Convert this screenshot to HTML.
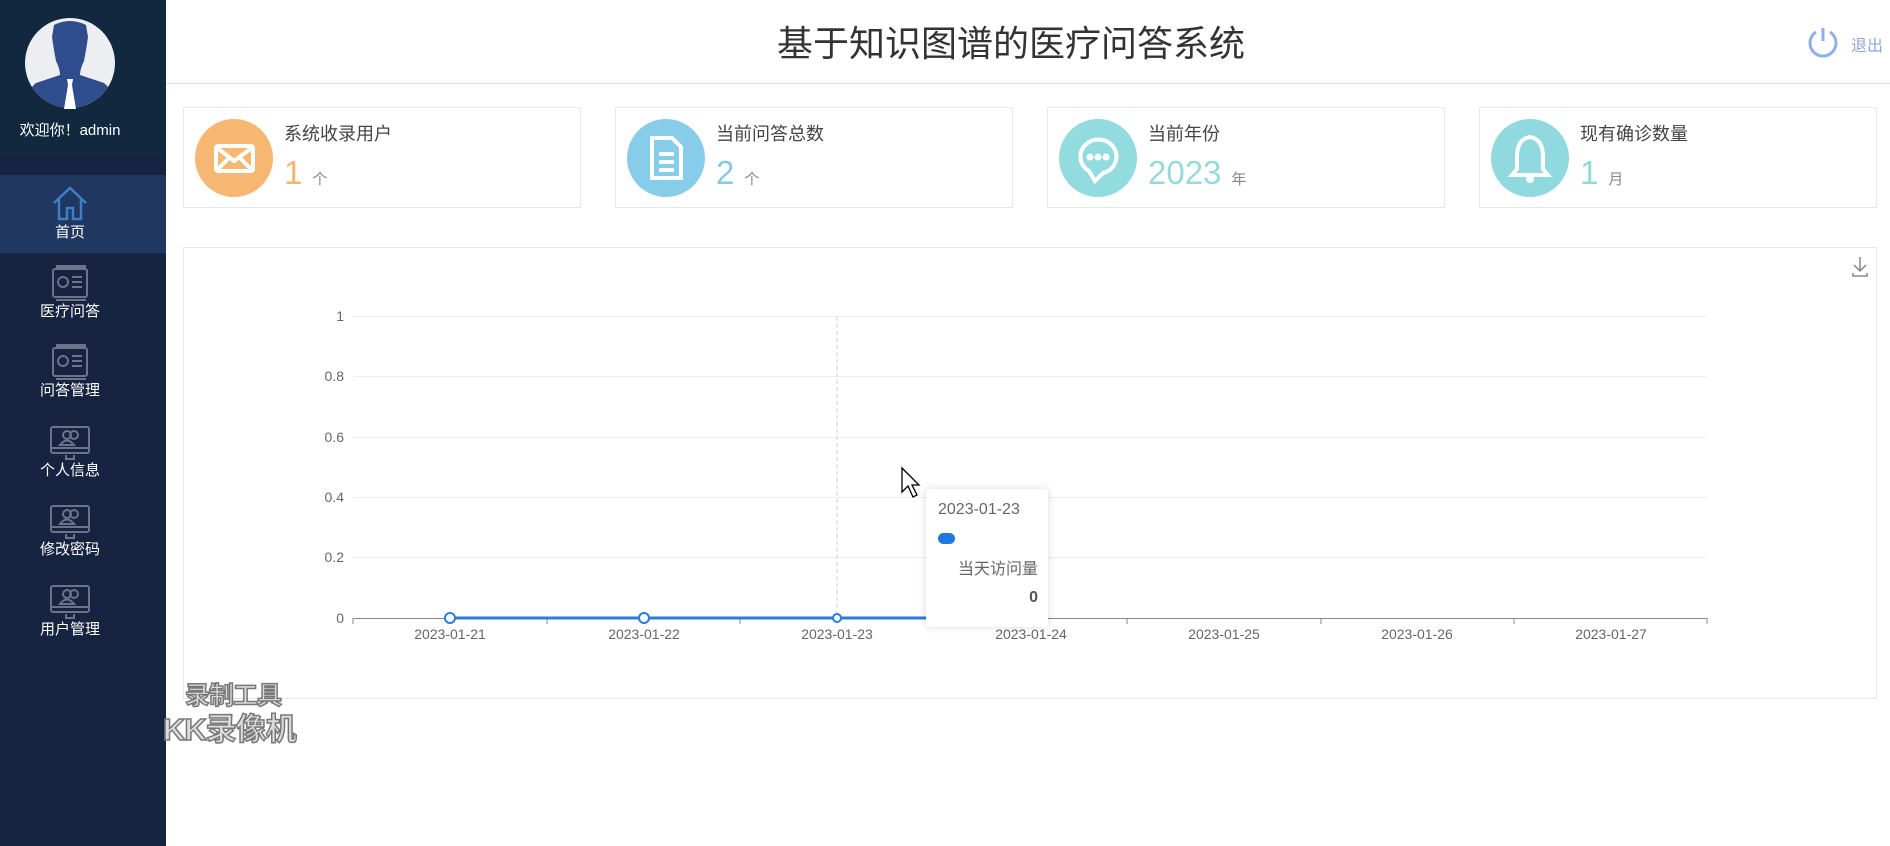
<!DOCTYPE html>
<html><head><meta charset="utf-8"><style>
*{margin:0;padding:0;box-sizing:border-box}
body{width:1890px;height:846px;background:#fff;font-family:"Liberation Sans","Noto Sans CJK SC",sans-serif;position:relative;overflow:hidden}
.side{position:absolute;left:0;top:0;width:166px;height:846px;background:#172441}
.sidetop{position:absolute;left:0;top:0;width:166px;height:157px;background:#11283e}
.welcome{position:absolute;top:119px;left:0;width:140px;text-align:center;color:#fff;font-size:15px}
.nav{position:absolute;left:0;width:166px;height:78px;text-align:center;color:#fff;font-size:15px}
.nav.active{background:#203761}
.nav svg{position:absolute;left:50px;top:8px}
.nav span{position:absolute;left:0;width:140px;top:46px}
.header{position:absolute;left:166px;top:0;right:0;height:84px;border-bottom:1px solid #cfe1f0}
.title{position:absolute;left:166px;right:34px;top:15px;text-align:center;font-size:36px;color:#333}
.card{position:absolute;top:107px;height:101px;width:398px;border:1px solid #e6e6e6}
.circ{position:absolute;left:11px;top:11px;width:78px;height:78px;border-radius:50%}
.circ svg{position:absolute;left:0;top:0}
.ct{position:absolute;left:100px;top:12px;font-size:18px;color:#444}
.cn{position:absolute;left:100px;top:46px;font-size:33px}
.cu{font-size:15px;color:#888;margin-left:10px}
.panel{position:absolute;left:183px;top:247px;width:1694px;height:452px;border:1px solid #e6e6e6}
</style></head><body>
<div class="side"></div><div class="sidetop"></div>
<svg style="position:absolute;left:24px;top:17px" width="92" height="92" viewBox="0 0 92 92">
<defs><clipPath id="c"><circle cx="46" cy="46" r="45"/></clipPath></defs>
<circle cx="46" cy="46" r="45" fill="#eceef2"/>
<g clip-path="url(#c)" fill="#2f4d8c">
<path d="M30 8 Q46 0 62 8 L64 20 Q62 34 60 44 Q56 52 56 58 L80 66 Q90 74 92 92 L0 92 Q2 74 12 66 L36 58 Q36 52 32 44 Q30 34 28 20 Z"/>
</g>
<path d="M43 62 L49 62 L48 68 L52 92 L40 92 L44 68 Z" fill="#fff"/>
</svg>
<div class="welcome">欢迎你！admin</div>

<div class="nav active" style="top:175px"><svg width="40" height="40" viewBox="0 0 40 40" fill="none" stroke="#3f7fc4" stroke-width="2.5"><path d="M4 20 L20 5 L36 20 M9 16 V36 H17 V25 H23 V36 H31 V16"/></svg><span>首页</span></div>
<div class="nav" style="top:255px"><svg width="40" height="40" viewBox="0 0 40 40" fill="none" stroke="#6b7488" stroke-width="2"><rect x="3" y="6" width="34" height="28" rx="2"/><rect x="7" y="3" width="28" height="2"/><circle cx="13" cy="19" r="5"/><path d="M22 14H32M22 19H32M22 24H32M6 37H36"/></svg><span style="top:45px">医疗问答</span></div>
<div class="nav" style="top:334px"><svg width="40" height="40" viewBox="0 0 40 40" fill="none" stroke="#6b7488" stroke-width="2"><rect x="3" y="6" width="34" height="28" rx="2"/><rect x="7" y="3" width="28" height="2"/><circle cx="13" cy="19" r="5"/><path d="M22 14H32M22 19H32M22 24H32M6 37H36"/></svg><span style="top:45px">问答管理</span></div>
<div class="nav" style="top:414px"><svg width="40" height="40" viewBox="0 0 40 40" fill="none" stroke="#6b7488" stroke-width="2"><rect x="1" y="5" width="38" height="26" rx="2"/><path d="M1 26H39M16 33V37H24V33"/><circle cx="17" cy="13" r="4"/><path d="M10 23Q17 14 24 23Z"/><circle cx="24" cy="13" r="4"/></svg><span style="top:45px">个人信息</span></div>
<div class="nav" style="top:493px"><svg width="40" height="40" viewBox="0 0 40 40" fill="none" stroke="#6b7488" stroke-width="2"><rect x="1" y="5" width="38" height="26" rx="2"/><path d="M1 26H39M16 33V37H24V33"/><circle cx="17" cy="13" r="4"/><path d="M10 23Q17 14 24 23Z"/><circle cx="24" cy="13" r="4"/></svg><span style="top:45px">修改密码</span></div>
<div class="nav" style="top:573px"><svg width="40" height="40" viewBox="0 0 40 40" fill="none" stroke="#6b7488" stroke-width="2"><rect x="1" y="5" width="38" height="26" rx="2"/><path d="M1 26H39M16 33V37H24V33"/><circle cx="17" cy="13" r="4"/><path d="M10 23Q17 14 24 23Z"/><circle cx="24" cy="13" r="4"/></svg><span style="top:45px">用户管理</span></div>

<div class="header"></div>
<div class="title">基于知识图谱的医疗问答系统</div>
<svg style="position:absolute;left:1806px;top:25px" width="34" height="34" viewBox="0 0 34 34" fill="none" stroke="#8fb0e6" stroke-width="3"><path d="M10 7 A13 13 0 1 0 24 7"/><path d="M17 3V16"/></svg>
<div style="position:absolute;left:1851px;top:32px;font-size:16px;color:#8fa6dd">退出</div>

<div class="card" style="left:183px"><div class="circ" style="background:#f6b772"><svg width="78" height="78" fill="none" stroke="#fff" stroke-width="4"><rect x="21" y="27" width="37" height="25" rx="2"/><path d="M21 28L39 42L58 28M22 51L34 39M57 51L45 39"/></svg></div><div class="ct">系统收录用户</div><div class="cn" style="color:#f3b66c">1<span class="cu">个</span></div></div>
<div class="card" style="left:615px"><div class="circ" style="background:#87cdea"><svg width="78" height="78" fill="none" stroke="#fff" stroke-width="4"><path d="M25 19H45L54 28V59H25Z"/><path d="M32 35H47M32 43H47M32 51H47"/></svg></div><div class="ct">当前问答总数</div><div class="cn" style="color:#86c9e6">2<span class="cu">个</span></div></div>
<div class="card" style="left:1047px"><div class="circ" style="background:#92dbde"><svg width="78" height="78" fill="none" stroke="#fff" stroke-width="4"><path d="M30 52 A18 17 0 1 1 44 54 L36 62 Z"/><circle cx="31" cy="38" r="1.5" fill="#fff"/><circle cx="39" cy="38" r="1.5" fill="#fff"/><circle cx="47" cy="38" r="1.5" fill="#fff"/></svg></div><div class="ct">当前年份</div><div class="cn" style="color:#97dadb">2023<span class="cu">年</span></div></div>
<div class="card" style="left:1479px"><div class="circ" style="background:#90d9df"><svg width="78" height="78" fill="none" stroke="#fff" stroke-width="4"><path d="M39 18 Q26 20 26 38 V50 L21 56 H57 L52 50 V38 Q52 20 39 18Z"/><circle cx="39" cy="60" r="2" fill="#fff"/></svg></div><div class="ct">现有确诊数量</div><div class="cn" style="color:#92d8dd">1<span class="cu">月</span></div></div>

<div class="panel"></div>
<svg style="position:absolute;left:0;top:0" width="1890" height="846" font-family="Liberation Sans, sans-serif">
<g fill="none" stroke="#888" stroke-width="1.5"><path d="M1860 257V270M1854 265L1860 271L1866 265M1853 273V276H1867V273"/></g>
<g stroke="#eee" stroke-width="1"><path d="M353 316.5H1707M353 376.5H1707M353 437.5H1707M353 497.5H1707M353 557.5H1707"/></g>
<g font-size="14" fill="#666" text-anchor="end"><text x="344" y="321">1</text><text x="344" y="381">0.8</text><text x="344" y="442">0.6</text><text x="344" y="502">0.4</text><text x="344" y="562">0.2</text><text x="344" y="623">0</text></g>
<path d="M837 317V618" stroke="#ccc" stroke-dasharray="4,3"/>
<path d="M353 618.5H1707" stroke="#888"/>
<g stroke="#888"><path d="M353 618V624M547 618V624M740 618V624M934 618V624M1127 618V624M1321 618V624M1514 618V624M1707 618V624"/></g>
<g font-size="14" fill="#666" text-anchor="middle"><text x="450" y="639">2023-01-21</text><text x="644" y="639">2023-01-22</text><text x="837" y="639">2023-01-23</text><text x="1031" y="639">2023-01-24</text><text x="1224" y="639">2023-01-25</text><text x="1417" y="639">2023-01-26</text><text x="1611" y="639">2023-01-27</text></g>
<path d="M450 618H1031" stroke="#2b7dd6" stroke-width="3"/>
<g fill="#fff" stroke="#2b7dd6" stroke-width="2"><circle cx="450" cy="618" r="5"/><circle cx="644" cy="618" r="5"/><circle cx="837" cy="618" r="4"/></g>
<path d="M902 468V492L908 486L913 497L917 495L912 485H919Z" fill="#fff" stroke="#000" stroke-width="1.3"/>
</svg>
<div style="position:absolute;left:926px;top:489px;width:122px;height:138px;background:#fff;box-shadow:0 0 8px rgba(0,0,0,.15);border-radius:3px">
<div style="position:absolute;left:12px;top:12px;font-size:16px;color:#666">2023-01-23</div>
<div style="position:absolute;left:12px;top:44px;width:17px;height:11px;border-radius:6px;background:#1e78dd"></div>
<div style="position:absolute;right:10px;top:66px;font-size:16px;color:#666">当天访问量</div>
<div style="position:absolute;right:10px;top:100px;font-size:16px;color:#555;font-weight:bold">0</div>
</div>
<div style="position:absolute;left:185px;top:676px;font-size:25px;font-weight:bold;color:#ddd;-webkit-text-stroke:1.5px #777;letter-spacing:-1px">录制工具</div>
<div style="position:absolute;left:163px;top:704px;font-size:31px;font-weight:bold;color:#ddd;-webkit-text-stroke:1.5px #777;letter-spacing:-1px">KK录像机</div>
</body></html>
